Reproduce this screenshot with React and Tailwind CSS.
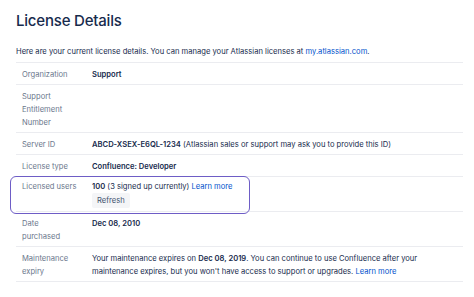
import React from 'react';

const rows = [
  { label: 'Organization', value: <span className="font-semibold">Support</span> },
  { label: <>Support<br />Entitlement<br />Number</>, value: null },
  {
    label: 'Server ID',
    value: (
      <>
        <span className="font-semibold">ABCD-XSEX-E6QL-1234</span> (Atlassian sales or support may ask you to provide this ID)
      </>
    ),
  },
  { label: 'License type', value: <span className="font-semibold">Confluence: Developer</span> },
  {
    label: 'Licensed users',
    highlight: true,
    value: (
      <>
        <div>
          <span className="font-semibold">100</span> (3 signed up currently){' '}
          <a className="text-[#0052CC]">Learn more</a>
        </div>
        <button className="px-[5px] h-[15px] bg-[#F4F5F7] text-[#42526E] rounded-[2px] leading-[15px]">
          Refresh
        </button>
      </>
    ),
  },
  { label: <>Date<br />purchased</>, value: <span className="font-semibold">Dec 08, 2010</span> },
  {
    label: <>Maintenance<br />expiry</>,
    value: (
      <>
        Your maintenance expires on <span className="font-semibold">Dec 08, 2019</span>. You can continue to use Confluence after your
        <br />
        maintenance expires, but you won't have access to support or upgrades.{' '}
        <a className="text-[#0052CC]">Learn more</a>
      </>
    ),
  },
];

export default function App() {
  return (
    <div className="w-[474px] h-[297px] bg-white overflow-hidden pl-[16px] pr-[11px] pt-[11px] text-[#172B4D] font-['Inter',sans-serif]">
      <h1 className="text-[15px] leading-[20px] font-medium tracking-[-0.2px]">License Details</h1>

      <p className="mt-[15px] text-[7.6px] leading-[12px] whitespace-nowrap">
        Here are your current license details. You can manage your Atlassian licenses at{' '}
        <a className="text-[#0052CC]">my.atlassian.com</a>.
      </p>

      {/* license table */}
      <div className="mt-[4px] relative border-t border-[#EBECF0] text-[7.6px] leading-[13px]">
        {rows.map((row, i) => (
          <div
            key={i}
            className={`relative flex border-b border-[#EBECF0] ${row.highlight ? 'pt-[3px] pb-[3px]' : 'pt-[5px] pb-[3px]'}`}
          >
            <div className="w-[76px] shrink-0 pl-[6px] text-[#6B778C]">{row.label}</div>
            <div className="flex-1 min-w-0">{row.value || <span>&nbsp;</span>}</div>
            {row.highlight && (
              <div className="absolute left-[-6px] w-[240px] top-[-1px] bottom-[-3px] border-[1.5px] border-[#6E5DC6] rounded-[6px]" />
            )}
          </div>
        ))}
      </div>
    </div>
  );
}
